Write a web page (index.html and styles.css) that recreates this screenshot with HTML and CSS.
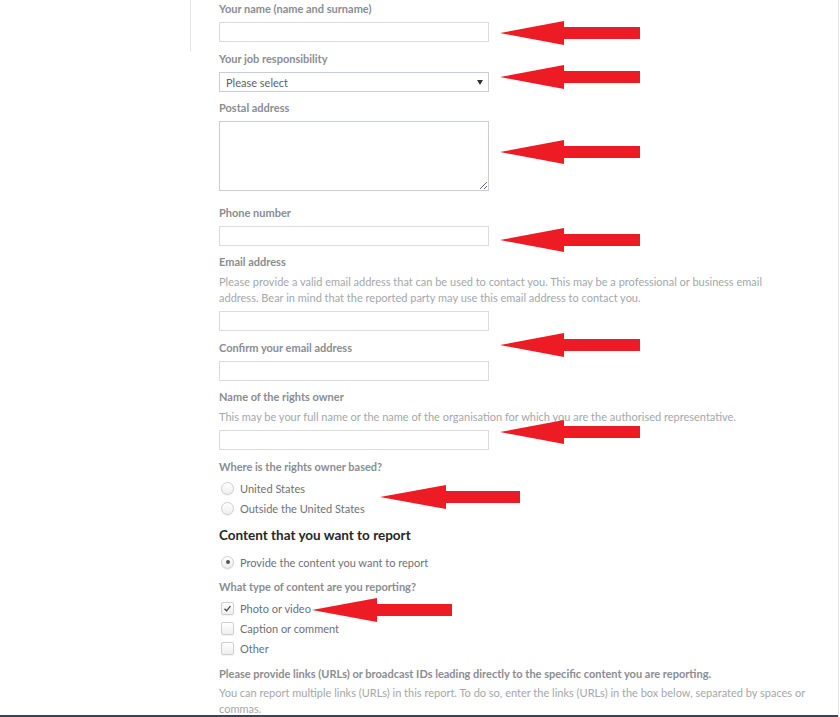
FILE: index.html
```html
<!DOCTYPE html>
<html lang="en">
<head>
<meta charset="utf-8">
<title>Report form</title>
<link rel="stylesheet" href="styles.css">
</head>
<body>
<div class="page">
  <div class="body">
    <aside class="side"><div class="side-line"></div></aside>
    <main class="form">
      <div class="field">
        <label class="label">Your name (name and surname)</label>
        <input class="input" type="text">
      </div>
      <div class="field field-close">
        <label class="label">Your job responsibility</label>
        <div class="select"><span>Please select</span><span class="caret"></span></div>
      </div>
      <div class="field field-tall">
        <label class="label">Postal address</label>
        <textarea class="textarea"></textarea>
      </div>
      <div class="field field-close">
        <label class="label">Phone number</label>
        <input class="input" type="text">
      </div>
      <div class="field">
        <label class="label">Email address</label>
        <p class="help">Please provide a valid email address that can be used to contact you. This may be a professional or business email address. Bear in mind that the reported party may use this email address to contact you.</p>
        <input class="input" type="text">
      </div>
      <div class="field field-close">
        <label class="label">Confirm your email address</label>
        <input class="input" type="text">
      </div>
      <div class="field">
        <label class="label">Name of the rights owner</label>
        <p class="help">This may be your full name or the name of the organisation for which you are the authorised representative.</p>
        <input class="input" type="text">
      </div>
      <div class="group">
        <div class="label label-tight">Where is the rights owner based?</div>
        <div class="option"><span class="radio"></span><span>United States</span></div>
        <div class="option"><span class="radio"></span><span>Outside the United States</span></div>
      </div>
      <h2 class="heading">Content that you want to report</h2>
      <div class="group">
        <div class="option"><span class="radio radio-on"></span><span>Provide the content you want to report</span></div>
      </div>
      <div class="group">
        <div class="label label-tight">What type of content are you reporting?</div>
        <div class="option"><span class="check check-on"><svg viewBox="0 0 13 13" width="13" height="13"><path d="M3 6.8 L5.4 9.2 L10 3.6" fill="none" stroke="#444" stroke-width="1.5"/></svg></span><span>Photo or video</span></div>
        <div class="option"><span class="check"></span><span>Caption or comment</span></div>
        <div class="option"><span class="check"></span><span>Other</span></div>
      </div>
      <div class="group group-last">
        <div class="label label-tight">Please provide links (URLs) or broadcast IDs leading directly to the specific content you are reporting.</div>
        <p class="help help-wide">You can report multiple links (URLs) in this report. To do so, enter the links (URLs) in the box below, separated by spaces or commas.</p>
      </div>
    </main>
    <svg class="arrow a1" viewBox="0 0 140 24" width="140" height="24"><polygon points="0,12 64,0 64,6 140,6 140,18 64,18 64,24"/></svg>
    <svg class="arrow a2" viewBox="0 0 140 24" width="140" height="24"><polygon points="0,12 64,0 64,6 140,6 140,18 64,18 64,24"/></svg>
    <svg class="arrow a3" viewBox="0 0 140 24" width="140" height="24"><polygon points="0,12 64,0 64,6 140,6 140,18 64,18 64,24"/></svg>
    <svg class="arrow a4" viewBox="0 0 140 24" width="140" height="24"><polygon points="0,12 64,0 64,6 140,6 140,18 64,18 64,24"/></svg>
    <svg class="arrow a5" viewBox="0 0 140 24" width="140" height="24"><polygon points="0,12 64,0 64,6 140,6 140,18 64,18 64,24"/></svg>
    <svg class="arrow a6" viewBox="0 0 140 24" width="140" height="24"><polygon points="0,12 64,0 64,6 140,6 140,18 64,18 64,24"/></svg>
    <svg class="arrow a7" viewBox="0 0 140 24" width="140" height="24"><polygon points="0,12 66,0 66,6 140,6 140,18 66,18 66,24"/></svg>
    <svg class="arrow a8" viewBox="0 0 140 24" width="140" height="24"><polygon points="0,12 65,0 65,6 140,6 140,18 65,18 65,24"/></svg>
  </div>
  <div class="bottom-bar"></div>
</div>
</body>
</html>
```
FILE: styles.css
```css
* { box-sizing: border-box; }
html, body { margin: 0; padding: 0; background: #fff; }
body { font-family: "Lato", "Liberation Sans", sans-serif; font-size: 11px; color: #888b90; }

.page {
  width: 839px;
  height: 717px;
  display: flex;
  flex-direction: column;
  border-right: 1px solid #e4e4e4;
  overflow: hidden;
}
.body {
  flex: 1;
  display: flex;
  position: relative;
  overflow: hidden;
}
.bottom-bar { height: 2px; background: #3b4352; flex: none; }

.side { width: 191px; flex: none; }
.side-line { width: 1px; height: 52px; margin-left: 190px; background: #e6e6e6; }

.form { padding: 1px 0 0 28px; flex: 1; min-width: 0; }

.field { margin-bottom: 9px; }
.field-close { margin-bottom: 8px; }
.field-tall { margin-bottom: 14px; }

.label {
  display: block;
  font-weight: 700;
  line-height: 16px;
  margin-bottom: 5px;
  color: #8a8d92;
}
.label-tight { margin-bottom: 3px; }

.help {
  margin: -1px 0 5px;
  line-height: 16px;
  color: #a4a7ab;
  max-width: 560px;
}
.help-wide { max-width: 600px; margin: 0; }

.input, .select, .textarea {
  display: block;
  width: 270px;
  height: 20px;
  border: 1px solid #dcdcdc;
  background: #fff;
  margin: 0;
  padding: 0 6px;
  font: inherit;
}
.select {
  display: flex;
  align-items: center;
  justify-content: space-between;
  border-color: #c9cdd6;
  color: #5c5f64;
  padding: 0 5px 0 6px;
}
.caret {
  width: 0; height: 0;
  border-left: 3px solid transparent;
  border-right: 3px solid transparent;
  border-top: 5px solid #333;
}
.textarea {
  height: 70px;
  border-color: #c9cdd8;
  resize: vertical;
}

.group { margin-bottom: 7px; }
.group-last { margin-top: 8px; }
.option {
  display: flex;
  align-items: center;
  height: 20px;
  padding-left: 2px;
  color: #6e7176;
  gap: 6px;
}
.radio, .check {
  width: 13px; height: 13px;
  flex: none;
  border: 1px solid #cfcfcf;
  background: linear-gradient(#ffffff, #eeeeee);
  box-shadow: 0 1px 1px rgba(0,0,0,0.06);
  display: flex;
  align-items: center;
  justify-content: center;
}
.radio { border-radius: 50%; }
.radio-on::after {
  content: "";
  width: 4px; height: 4px;
  border-radius: 50%;
  background: #555;
}
.check { border-radius: 2px; }
.check svg { display: block; }

.heading {
  margin: 0 0 7px;
  font-size: 13.5px;
  line-height: 20px;
  font-weight: 700;
  color: #262626;
}

.arrow { position: absolute; fill: #ed1c24; }
.a1 { left: 500px; top: 21px; }
.a2 { left: 500px; top: 65px; }
.a3 { left: 500px; top: 140px; }
.a4 { left: 500px; top: 228px; }
.a5 { left: 500px; top: 333px; }
.a6 { left: 500px; top: 420px; }
.a7 { left: 380px; top: 485px; }
.a8 { left: 312px; top: 598px; }
```
